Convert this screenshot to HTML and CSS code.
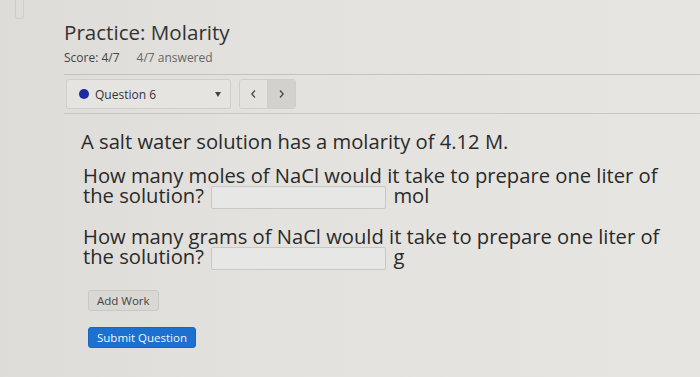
FILE: index.html
```html
<!DOCTYPE html>
<html>
<head>
<meta charset="utf-8">
<link rel="stylesheet" href="styles.css">
</head>
<body>
<div class="page">
  <span class="edge"></span>
  <header class="head">
    <h1 class="title">Practice: Molarity</h1>
    <div class="meta"><span>Score: 4/7</span><span class="answered">4/7 answered</span></div>
  </header>
  <div class="navbar">
    <div class="select">
      <span class="dot"></span>
      <span class="qlabel">Question 6</span>
      <span class="caret"></span>
    </div>
    <div class="pager">
      <span class="pbtn"><svg width="7" height="10" viewBox="0 0 7 10"><path d="M5 1.5 L1.8 5 L5 8.5" fill="none" stroke="#4a4a4a" stroke-width="1.3"/></svg></span>
      <span class="pbtn next"><svg width="7" height="10" viewBox="0 0 7 10"><path d="M2 1.5 L5.2 5 L2 8.5" fill="none" stroke="#4a4a4a" stroke-width="1.3"/></svg></span>
    </div>
  </div>
  <main class="question">
    <p class="intro">A salt water solution has a molarity of 4.12 M.</p>
    <p class="part">How many moles of NaCl would it take to prepare one liter of the solution? <span class="field f1"></span> mol</p>
    <p class="part">How many grams of NaCl would it take to prepare one liter of the solution? <span class="field f2"></span> g</p>
    <div class="actions">
      <button class="btn add">Add Work</button>
      <button class="btn submit">Submit Question</button>
    </div>
  </main>
</div>
</body>
</html>
```
FILE: styles.css
```css
html, body {
  margin: 0;
  padding: 0;
  background: #e2e1dd;
  font-family: "Open Sans", "Noto Sans", sans-serif;
  color: #2f2f2f;
}
.page {
  position: relative;
  width: 700px;
  height: 377px;
  overflow: hidden;
  background: linear-gradient(90deg, #dedcd8 0%, #e3e2de 40%, #e6e5e2 100%);
}
.edge {
  position: absolute;
  left: 15px;
  top: -4px;
  width: 7px;
  height: 21px;
  border: 1px solid #cfcdc8;
  border-radius: 3px;
}
.head {
  padding: 18px 0 0 64px;
  height: 55px;
  box-sizing: border-box;
}
.title {
  margin: 0;
  font-size: 20.6px;
  font-weight: 400;
  line-height: 28px;
  color: #333;
}
.meta {
  font-size: 12px;
  color: #444;
  line-height: 16px;
  margin-top: 4px;
}
.answered {
  margin-left: 17px;
  color: #666;
}
.navbar {
  margin-left: 64px;
  border-top: 1px solid #c2c2c0;
  border-bottom: 1px solid #c7c7c5;
  height: 38px;
  margin-top: 19px;
  display: flex;
  align-items: center;
  gap: 8px;
  padding-left: 2px;
}
.select {
  width: 165px;
  height: 30px;
  border: 1px solid #cfcecb;
  border-radius: 3px;
  background: #e5e4e1;
  display: flex;
  align-items: center;
  box-sizing: border-box;
  padding: 0 9px 0 12px;
}
.dot {
  width: 10px;
  height: 10px;
  border-radius: 50%;
  background: #1d2c9e;
  margin-right: 6px;
}
.qlabel {
  font-size: 12px;
  color: #333;
  flex: 1;
}
.caret {
  width: 0;
  height: 0;
  border-left: 3.5px solid transparent;
  border-right: 3.5px solid transparent;
  border-top: 5px solid #444;
}
.pager {
  display: flex;
  height: 30px;
  border: 1px solid #cfcecb;
  border-radius: 3px;
  overflow: hidden;
  box-sizing: border-box;
}
.pbtn {
  width: 27px;
  display: flex;
  align-items: center;
  justify-content: center;
  background: #e3e2df;
}
.pbtn.next {
  background: #d2d1cd;
  border-left: 1px solid #cfcecb;
}
.question {
  padding: 17px 0 0 81px;
  width: 600px;
}
.question p {
  margin: 0;
  font-size: 20.2px;
  line-height: 20px;
  color: #2a2a2a;
}
.intro {
  margin-bottom: 14px !important;
}
.part {
  margin-bottom: 17px !important;
  padding-left: 2px;
}
.field {
  display: inline-block;
  width: 175px;
  height: 23px;
  border: 1px solid #c8c8c6;
  border-radius: 2px;
  background: #e7e7e5;
  vertical-align: -6px;
  box-sizing: border-box;
  margin: 0 2px;
}
.actions {
  display: flex;
  flex-direction: column;
  align-items: flex-start;
  gap: 16px;
  padding-left: 7px;
  padding-top: 3px;
}
.btn {
  font-family: "Open Sans", "Noto Sans", sans-serif;
  font-size: 11.5px;
  border-radius: 3px;
  padding: 0 8px;
  height: 21px;
  line-height: 19px;
}
.add {
  background: #d9d8d4;
  border: 1px solid #c9c8c4;
  color: #444;
}
.submit {
  background: #1b70d0;
  border: 1px solid #1a66bf;
  color: #f2f6fb;
}
```
